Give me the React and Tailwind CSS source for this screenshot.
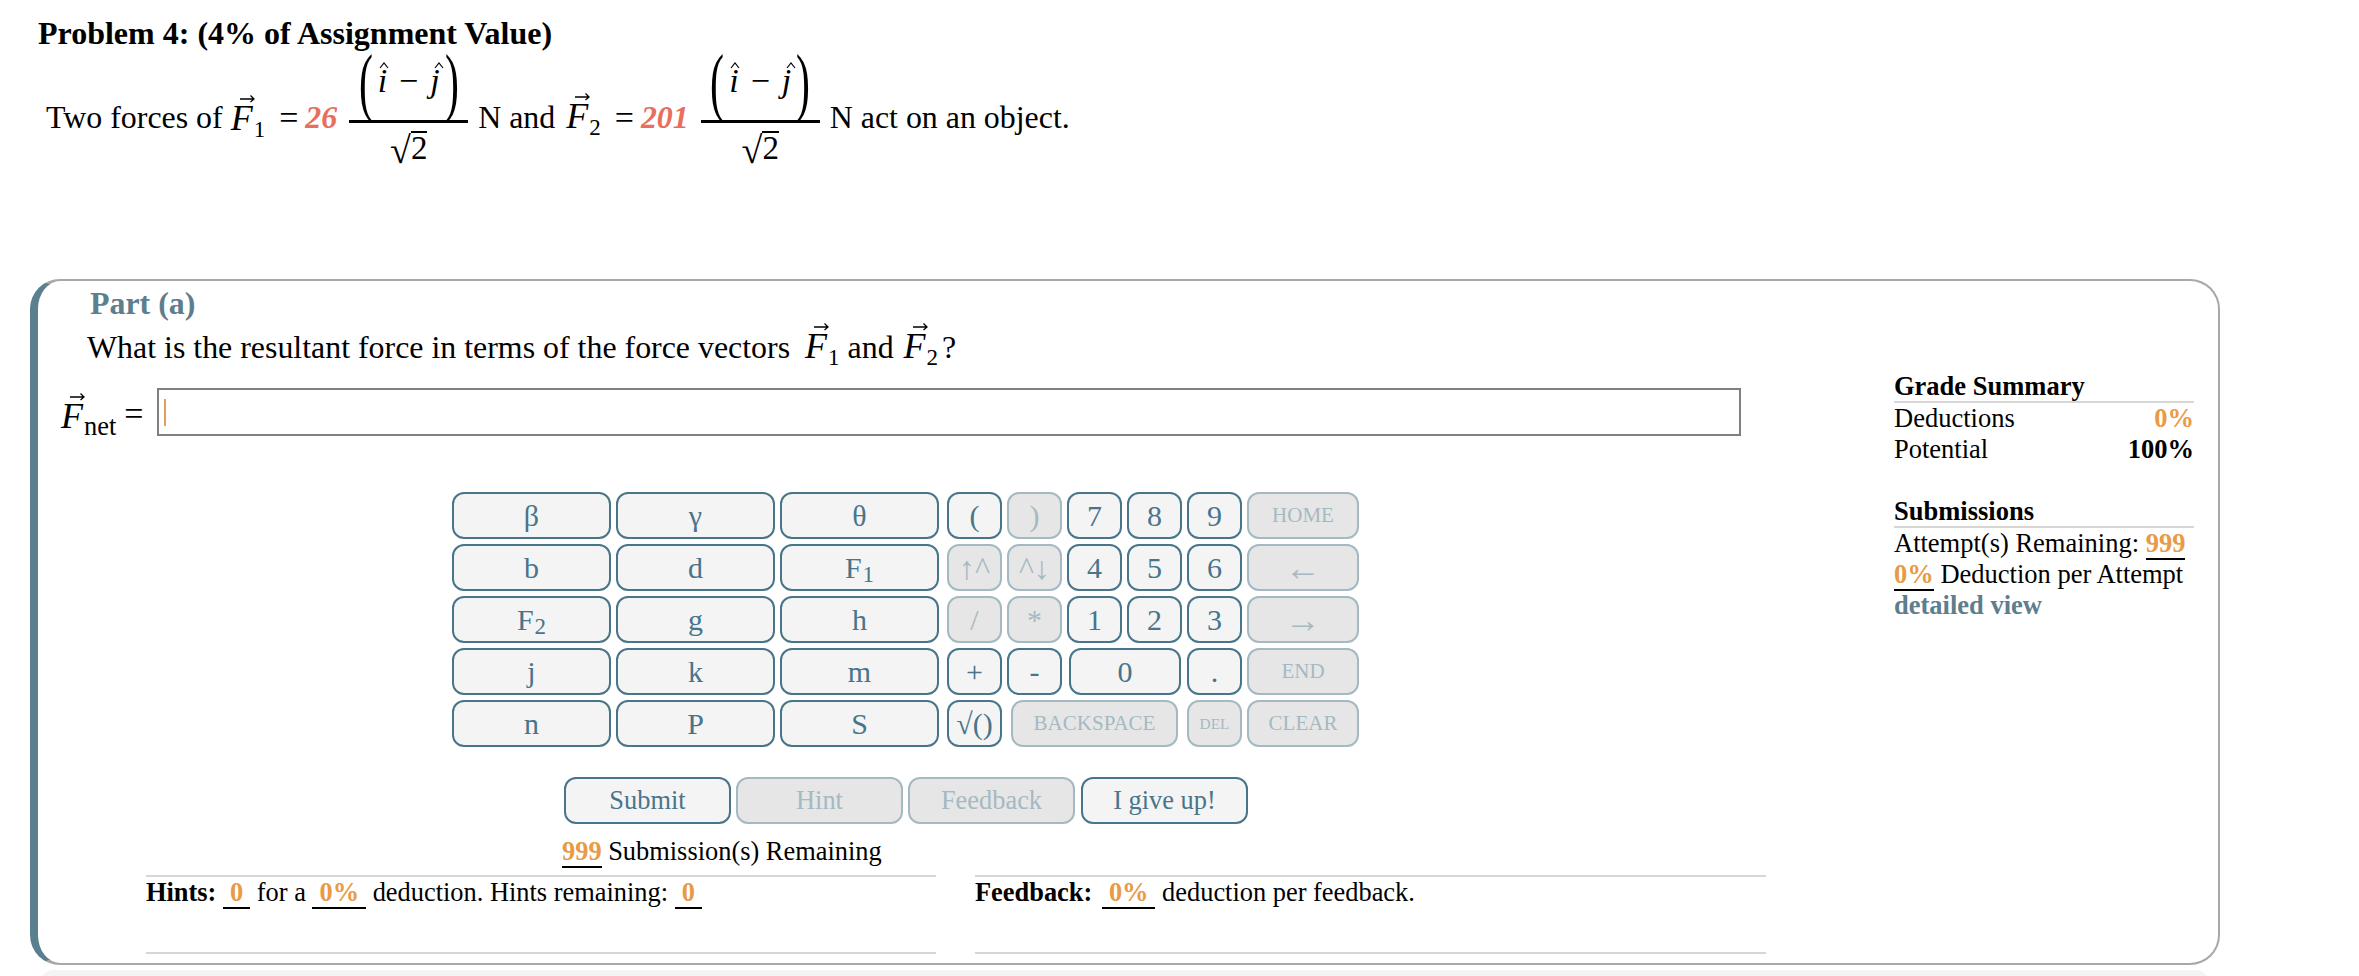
import React from 'react';

const serif = 'font-["Liberation_Serif","Times_New_Roman",serif]';

// vector F with the little arrow on top
function Arrow() {
  return (
    <svg className="absolute left-[9px] top-[-6px] w-[15px] h-[9px]" viewBox="0 0 15 9" fill="none" stroke="#000" strokeWidth="1.3">
      <path d="M0 5h14M10.5 1.5l3.5 3.5l-3.5 3" />
    </svg>
  );
}

function VecF({ sub }) {
  return (
    <span className="inline-block whitespace-nowrap leading-none">
      <span className="relative inline-block italic text-[36px] leading-none">
        F
        <Arrow />
      </span>
      <span className="text-[23px] relative top-[7px] ml-[1px]">{sub}</span>
    </span>
  );
}

// unit vector letter, the accent is a small drawn chevron
function Hat({ ch, cls }) {
  return (
    <span className="relative inline-block italic text-[34px] leading-none">
      {ch}
      <svg className={`absolute top-[-2px] w-[10px] h-[7px] ${cls}`} viewBox="0 0 10 7" fill="none" stroke="#000" strokeWidth="1.2">
        <path d="M1 6l4-5l4 5" />
      </svg>
    </span>
  );
}

function Paren({ ch }) {
  return <span className="w-[14px] h-[60px] flex justify-center text-[76px] leading-[60px] scale-x-[0.55]">{ch}</span>;
}

function UnitFraction() {
  return (
    <span className="inline-flex flex-col items-center w-[119px] align-middle">
      <span className="flex items-center justify-center h-[61px] whitespace-nowrap relative top-[-8px]">
        <Paren ch="(" />
        <span className="flex items-center gap-[12px] px-[5px]">
          <Hat ch="i" cls="left-[1px]" />
          <span className="text-[34px] leading-none">−</span>
          <Hat ch="j" cls="left-[4px]" />
        </span>
        <Paren ch=")" />
      </span>
      <span className="w-full h-[3px] bg-black" />
      <span className="flex items-start justify-center h-[55px] pt-[8px]">
        <span className="text-[38px] leading-[38px]">√</span>
        <span className="border-t-2 border-black text-[33px] leading-[30px]">2</span>
      </span>
    </span>
  );
}

function Key({ w = 'w-[159px]', off, size = 'text-[30px]', children, cls = '' }) {
  const look = off
    ? 'border-[#a5b9c2] bg-[#e6e6e6] text-[#a5b9c2]'
    : 'border-[#48758a] bg-[#f4f4f4] text-[#48758a]';
  return (
    <div className={`${w} ${size} h-[47px] shrink-0 flex items-center justify-center rounded-[12px] border-2 leading-none whitespace-nowrap ${look} ${cls}`}>
      {children}
    </div>
  );
}

function Sub({ n }) {
  return <><span>F</span><span className="text-[23px] relative top-[7px] ml-[1px]">{n}</span></>;
}

function Num({ children, cls = '' }) {
  return <span className={`font-bold text-[#e89a45] border-b-2 border-black ${cls}`}>{children}</span>;
}

const small = 'w-[55px]';
const wide = 'w-[112px]';
const btn = 'text-[26.4px]';
const cap = 'text-[21px]';

export default function App() {
  return (
    <div className={`${serif} w-[2359px] h-[976px] overflow-hidden bg-white text-black relative`}>
      <h2 className="pl-[38px] pt-[15px] text-[32px] leading-[36px] font-bold">Problem 4: (4% of Assignment Value)</h2>

      <div className="pl-[46px] flex items-center text-[31.9px] whitespace-nowrap h-[122px] mt-[6px]">
        <span>Two forces of&nbsp;</span>
        <VecF sub="1" />
        <span className="ml-[14px] text-[34px] leading-none">=</span>
        <span className="ml-[7px] font-bold italic text-[#e76f5b]">26</span>
        <span className="ml-[12px]"><UnitFraction /></span>
        <span className="ml-[10px]">N and&nbsp;</span>
        <span className="ml-[3px]"><VecF sub="2" /></span>
        <span className="ml-[14px] text-[34px] leading-none">=</span>
        <span className="ml-[7px] font-bold italic text-[#e76f5b]">201</span>
        <span className="ml-[12px]"><UnitFraction /></span>
        <span className="ml-[10px]">N act on an object.</span>
      </div>

      <div className="ml-[30px] mt-[100px] w-[2190px] h-[686px] rounded-[30px] border-2 border-l-8 border-[#a8a8a8] border-l-[#5a7f8e] flex">
        <div className="w-[1860px] shrink-0">
          <div className="pl-[52px] pt-[5px] text-[31.9px] leading-[36px] font-bold text-[#5d7e8c]">Part (a)</div>
          <div className="pl-[49px] mt-[4px] text-[31.9px] leading-[44px] whitespace-nowrap">
            What is the resultant force in terms of the force vectors <span className="ml-[7px]"><VecF sub="1" /></span> and <span className="ml-[2px]"><VecF sub="2" /></span><span className="ml-[4px]">?</span>
          </div>
          <div className="flex items-center pl-[23px] mt-[18px] h-[48px]">
            <span className="w-[96px] shrink-0 whitespace-nowrap text-[31.68px] leading-none relative top-[4px]">
              <span className="relative inline-block italic text-[36px] leading-none">
                F
                <Arrow />
              </span>
              <span className="text-[26.4px] relative top-[7px] ml-[1px]">net</span>
              <span className="ml-[8px] text-[34px] relative top-[-3px]">=</span>
            </span>
            <div className="w-[1584px] h-[48px] border-2 border-[#808080] flex items-center pl-[5px]">
              <span className="w-[2px] h-[27px] bg-[#e0a060]" />
            </div>
          </div>

          <div className="pl-[414px] mt-[56px] flex flex-col gap-[5px]">
            <div className="flex gap-[5px]">
              <Key>β</Key><Key>γ</Key><Key>θ</Key>
              <Key w={small} cls="ml-[3px]">(</Key><Key w={small} off>)</Key>
              <Key w={small}>7</Key><Key w={small}>8</Key><Key w={small}>9</Key>
              <Key w={wide} off size={cap}>HOME</Key>
            </div>
            <div className="flex gap-[5px]">
              <Key>b</Key><Key>d</Key><Key><Sub n="1" /></Key>
              <Key w={small} off size="text-[32px]" cls="ml-[3px]">↑^</Key><Key w={small} off size="text-[32px]">^↓</Key>
              <Key w={small}>4</Key><Key w={small}>5</Key><Key w={small}>6</Key>
              <Key w={wide} off size="text-[36px]">←</Key>
            </div>
            <div className="flex gap-[5px]">
              <Key><Sub n="2" /></Key><Key>g</Key><Key>h</Key>
              <Key w={small} off cls="ml-[3px]">/</Key><Key w={small} off>*</Key>
              <Key w={small}>1</Key><Key w={small}>2</Key><Key w={small}>3</Key>
              <Key w={wide} off size="text-[36px]">→</Key>
            </div>
            <div className="flex gap-[5px]">
              <Key>j</Key><Key>k</Key><Key>m</Key>
              <Key w={small} cls="ml-[3px]">+</Key><Key w={small}>-</Key>
              <Key w={wide} cls="ml-[2px]">0</Key><Key w={small} cls="ml-[1px]">.</Key>
              <Key w={wide} off size={cap}>END</Key>
            </div>
            <div className="flex gap-[5px]">
              <Key>n</Key><Key>P</Key><Key>S</Key>
              <Key w={small} cls="ml-[3px]">√()</Key>
              <Key w="w-[167px]" off size={cap} cls="ml-[4px]">BACKSPACE</Key>
              <Key w={small} off size="text-[15.4px]" cls="ml-[4px]">DEL</Key>
              <Key w={wide} off size={cap}>CLEAR</Key>
            </div>
          </div>

          <div className="pl-[526px] mt-[30px] flex gap-[5px]">
            <Key w="w-[167px]" size={btn}>Submit</Key>
            <Key w="w-[167px]" off size={btn}>Hint</Key>
            <Key w="w-[167px]" off size={btn}>Feedback</Key>
            <Key w="w-[167px]" size={btn} cls="ml-[1px]">I give up!</Key>
          </div>

          <div className="pl-[524px] mt-[12px] text-[26.4px] leading-[31px]">
            <Num>999</Num> Submission(s) Remaining
          </div>

          <div className="flex pl-[108px] gap-[39px] mt-[8px]">
            <div className="w-[790px] h-[79px] border-y-2 border-[#d6d6d6] text-[26.4px] leading-[30px] whitespace-nowrap">
              <b>Hints:</b>&nbsp;<Num cls="px-[7px]">0</Num>&nbsp;for a&nbsp;<Num cls="px-[7px]">0%</Num>&nbsp;deduction. Hints remaining:&nbsp;<Num cls="px-[7px]">0</Num>
            </div>
            <div className="w-[791px] h-[79px] border-y-2 border-[#d6d6d6] text-[26.4px] leading-[30px] whitespace-nowrap">
              <b>Feedback:</b>&nbsp;<Num cls="px-[7px] ml-[3px]">0%</Num>&nbsp;deduction per feedback.
            </div>
          </div>
        </div>

        <div className="w-[300px] ml-[-4px] pt-[90px] text-[26.5px] leading-[31px]">
          <div className="font-bold border-b-2 border-[#d6d6d6] leading-[30px]">Grade Summary</div>
          <div className="flex justify-between"><span>Deductions</span><span className="font-bold text-[#e89a45]">0%</span></div>
          <div className="flex justify-between"><span>Potential</span><span className="font-bold">100%</span></div>
          <div className="font-bold border-b-2 border-[#d6d6d6] mt-[31px] leading-[30px]">Submissions</div>
          <div className="whitespace-nowrap">Attempt(s) Remaining: <Num>999</Num></div>
          <div className="whitespace-nowrap"><Num>0%</Num> Deduction per Attempt</div>
          <div className="font-bold text-[#5d7e8c]">detailed view</div>
        </div>
      </div>

      <div className="ml-[41px] mt-[5px] w-[2167px] h-[20px] bg-[#f4f4f4] rounded-t-[12px]" />
    </div>
  );
}
